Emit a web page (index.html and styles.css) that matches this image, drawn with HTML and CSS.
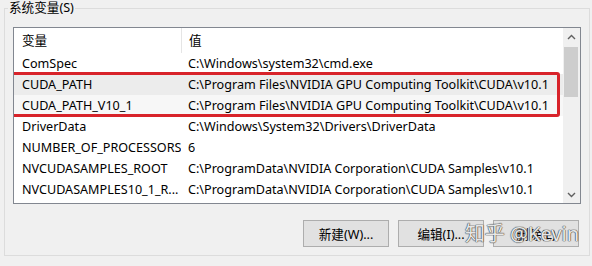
FILE: index.html
```html
<!DOCTYPE html>
<html lang="zh-CN">
<head>
    <meta charset="UTF-8">
    <title>系统变量</title>
    <link rel="stylesheet" href="styles.css">
</head>
<body>
    <fieldset class="group">
        <legend>系统变量(S)</legend>

        <div class="list">
            <div class="list-body">
                <div class="header row">
                    <div class="col-name">变量</div>
                    <div class="col-value">值</div>
                </div>

                <div class="row">
                    <div class="col-name">ComSpec</div>
                    <div class="col-value">C:\Windows\system32\cmd.exe</div>
                </div>

                <!-- 赤枠で囲んだ2行 -->
                <div class="marked">
                    <div class="row hover">
                        <div class="col-name">CUDA_PATH</div>
                        <div class="col-value">C:\Program Files\NVIDIA GPU Computing Toolkit\CUDA\v10.1</div>
                    </div>
                    <div class="row soft">
                        <div class="col-name">CUDA_PATH_V10_1</div>
                        <div class="col-value">C:\Program Files\NVIDIA GPU Computing Toolkit\CUDA\v10.1</div>
                    </div>
                </div>

                <div class="row">
                    <div class="col-name">DriverData</div>
                    <div class="col-value">C:\Windows\System32\Drivers\DriverData</div>
                </div>
                <div class="row">
                    <div class="col-name">NUMBER_OF_PROCESSORS</div>
                    <div class="col-value">6</div>
                </div>
                <div class="row">
                    <div class="col-name">NVCUDASAMPLES_ROOT</div>
                    <div class="col-value">C:\ProgramData\NVIDIA Corporation\CUDA Samples\v10.1</div>
                </div>
                <div class="row">
                    <div class="col-name">NVCUDASAMPLES10_1_R...</div>
                    <div class="col-value">C:\ProgramData\NVIDIA Corporation\CUDA Samples\v10.1</div>
                </div>
            </div>

            <div class="scrollbar">
                <div class="arrow">
                    <svg width="9" height="6" viewBox="0 0 9 6"><path d="M1 5 L4.5 1.5 L8 5" fill="none" stroke="#606060" stroke-width="1.4"/></svg>
                </div>
                <div class="track">
                    <div class="thumb"></div>
                </div>
                <div class="arrow">
                    <svg width="9" height="6" viewBox="0 0 9 6"><path d="M1 1 L4.5 4.5 L8 1" fill="none" stroke="#606060" stroke-width="1.4"/></svg>
                </div>
            </div>
        </div>

        <div class="buttons">
            <button>新建(W)...</button>
            <button>编辑(I)...</button>
            <button>删除(L)</button>
            <span class="watermark">知乎 @Kevin</span>
        </div>
    </fieldset>
</body>
</html>
```

FILE: styles.css
```css
body {
    margin: 0;
    background-color: #f0f0f0;
    font-family: "Noto Sans", "Noto Sans CJK SC", sans-serif;
    font-size: 12.6px;
    color: #000;
}

.group {
    margin: 0 2px 10px 4px;
    padding: 0 0 8px 0;
    border: 1px solid #dcdcdc;
    min-width: 0;
}

.group legend {
    margin-left: 3px;
    padding: 0 1px;
    line-height: 16px;
    height: 16px;
}

.list {
    margin: 11px 8px 0 8px;
    height: 175px;
    border: 1px solid #828790;
    background-color: white;
    display: flex;
}

.list-body {
    flex: 1;
    min-width: 0;
    overflow: hidden;
}

.row {
    display: flex;
    height: 21px;
    line-height: 21px;
    white-space: nowrap;
}

.row.header {
    height: 25px;
    line-height: 25px;
}

.col-name {
    width: 159px;
    padding-left: 8px;
    overflow: hidden;
    flex-shrink: 0;
}

.col-value {
    padding-left: 7px;
    overflow: hidden;
}

.header .col-name {
    border-right: 1px solid #e5e5e5;
}

.row.hover {
    background-color: #ececec;
}

.row.soft {
    background-color: #f7f7f7;
}

.marked {
    position: relative;
}

.marked::after {
    content: "";
    position: absolute;
    top: -2px;
    right: 3px;
    bottom: -1px;
    left: -3px;
    border: 3px solid #d8232a;
    border-radius: 3px;
}

.scrollbar {
    width: 17px;
    background-color: #f0f0f0;
    display: flex;
    flex-direction: column;
}

.arrow {
    height: 17px;
    display: flex;
    align-items: center;
    justify-content: center;
}

.track {
    flex: 1;
    padding-top: 2px;
}

.thumb {
    margin: 0 2px 0 1px;
    height: 50px;
    background-color: #cdcdcd;
}

.buttons {
    position: relative;
    display: flex;
    justify-content: flex-end;
    gap: 9px;
    margin: 16px 10px 0 0;
}

button {
    width: 86px;
    height: 27px;
    background-color: #e1e1e1;
    border: 1px solid #adadad;
    font-family: "Noto Sans", "Noto Sans CJK SC", sans-serif;
    font-size: 12.6px;
    color: #000;
    padding: 0;
}

.watermark {
    position: absolute;
    right: 0;
    top: 0;
    font-size: 20px;
    line-height: 27px;
    color: rgba(255, 255, 255, 0.9);
    text-shadow: 0 0 1px #444, 0 0 1px #444, 0 0 1px #444;
    pointer-events: none;
}
```
